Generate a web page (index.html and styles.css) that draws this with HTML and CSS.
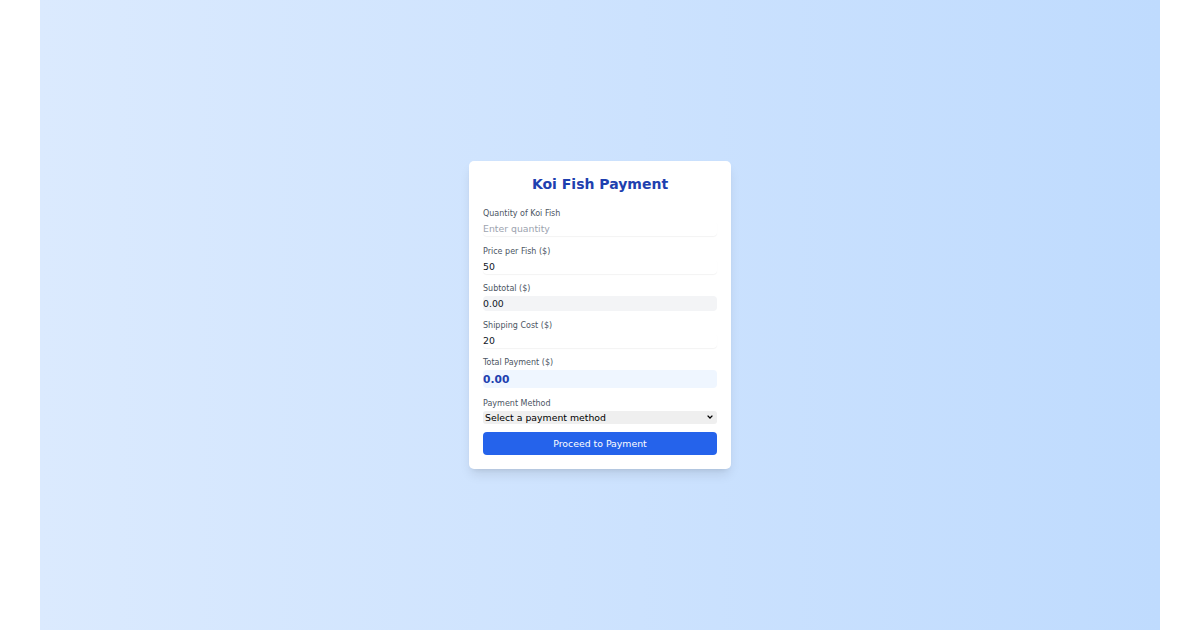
FILE: index.html
```html
<!DOCTYPE html>
<html lang="en">
  <head>
    <meta charset="UTF-8">
    <meta name="viewport" content="width=device-width, initial-scale=1.0">
    <title>Koi Fish Payment</title>
    <link rel="stylesheet" href="styles.css">
  </head>
  <body>
    <div class="page">
      <form class="card" id="paymentForm">
        <h1 class="title">Koi Fish Payment</h1>

        <div class="field">
          <label for="quantity">Quantity of Koi Fish</label>
          <input id="quantity" type="number" placeholder="Enter quantity">
        </div>

        <div class="field">
          <label for="price">Price per Fish ($)</label>
          <input id="price" type="number" value="50">
        </div>

        <div class="field">
          <label for="subtotal">Subtotal ($)</label>
          <input id="subtotal" class="readonly" type="text" value="0.00" readonly>
        </div>

        <div class="field">
          <label for="shipping">Shipping Cost ($)</label>
          <input id="shipping" type="number" value="20">
        </div>

        <div class="field">
          <label for="total">Total Payment ($)</label>
          <input id="total" class="total" type="text" value="0.00" readonly>
        </div>

        <div class="field">
          <label for="method">Payment Method</label>
          <select id="method">
            <option value="">Select a payment method</option>
            <option value="card">Credit Card</option>
            <option value="paypal">PayPal</option>
            <option value="bank">Bank Transfer</option>
          </select>
        </div>

        <button class="pay" type="button">Proceed to Payment</button>
      </form>
    </div>

    <script>
      function updateTotals() {
        const qty = parseFloat(document.getElementById("quantity").value) || 0;
        const price = parseFloat(document.getElementById("price").value) || 0;
        const shipping = parseFloat(document.getElementById("shipping").value) || 0;
        const subtotal = qty * price;
        document.getElementById("subtotal").value = subtotal.toFixed(2);
        document.getElementById("total").value = (qty > 0 ? subtotal + shipping : 0).toFixed(2);
      }

      ["quantity", "price", "shipping"].forEach(id => {
        document.getElementById(id).addEventListener("input", updateTotals);
      });
    </script>
  </body>
</html>
```

FILE: styles.css
```css
* {
    box-sizing: border-box;
}
body {
    margin: 0;
    font-family: "DejaVu Sans", sans-serif;
    background: #fff;
}
.page {
    width: 1120px;
    min-height: 630px;
    margin: 0 auto;
    display: flex;
    align-items: center;
    justify-content: center;
    background: linear-gradient(to right, #dbeafe, #bfdbfe);
}
.card {
    width: 262px;
    padding: 14px;
    background: #fff;
    border-radius: 5px;
    box-shadow: 0 7px 12px -2px rgba(0, 0, 0, 0.1), 0 3px 5px -3px rgba(0, 0, 0, 0.1);
    display: flex;
    flex-direction: column;
    gap: 9.33px;
}
.title {
    margin: 0 0 6px;
    font-size: 14px;
    line-height: 18px;
    font-weight: bold;
    color: #1e40af;
    text-align: center;
}
.field label {
    display: block;
    font-size: 8px;
    line-height: 12px;
    margin-bottom: 1px;
    color: #4b5563;
}
.field input {
    display: block;
    width: 100%;
    height: 15px;
    padding: 0;
    border: none;
    border-radius: 4px;
    font-family: inherit;
    font-size: 9.33px;
    color: #111827;
    background: #fff;
    box-shadow: 0 1px 1px rgba(0, 0, 0, 0.05);
    outline: none;
}
.field input::placeholder {
    color: #9ca3af;
}
.field input::-webkit-inner-spin-button,
.field input::-webkit-outer-spin-button {
    -webkit-appearance: none;
}
.field input.readonly {
    background: #f3f4f6;
    box-shadow: none;
}
.field input.total {
    height: 18px;
    background: #eff6ff;
    box-shadow: none;
    font-size: 10.67px;
    font-weight: bold;
    color: #1e40af;
}
/* small chevron instead of the native menulist arrow */
.field select {
    display: block;
    width: 100%;
    height: 13px;
    padding: 0 0 0 2px;
    border: none;
    border-radius: 3px;
    -webkit-appearance: none;
    appearance: none;
    background: #efefef url("data:image/svg+xml,%3Csvg xmlns='http://www.w3.org/2000/svg' width='6' height='4' viewBox='0 0 6 4'%3E%3Cpath d='M0.6 0.6 L3 3 L5.4 0.6' fill='none' stroke='%23000' stroke-width='1.3'/%3E%3C/svg%3E") no-repeat right 4px center;
    font-family: inherit;
    font-size: 9.33px;
    color: #000;
}
.pay {
    margin-top: -1px;
    height: 23px;
    border: none;
    border-radius: 4px;
    background: #2563eb;
    color: #fff;
    font-family: inherit;
    font-size: 9.33px;
    cursor: pointer;
}
.pay:hover {
    background: #1d4ed8;
}
```
